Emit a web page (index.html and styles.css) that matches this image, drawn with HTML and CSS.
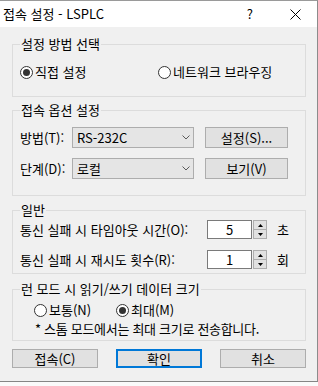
FILE: index.html
```html
<!DOCTYPE html>
<html lang="ko">
<head>
<meta charset="utf-8">
<title>접속 설정 - LSPLC</title>
<link rel="stylesheet" href="styles.css">
</head>
<body>
<div class="window">
  <div class="titlebar">
    <span class="title">접속 설정 - LSPLC</span>
    <span class="help">?</span>
    <span class="close"><svg width="11" height="11" viewBox="0 0 11 11"><path d="M0.5 0.5L10.5 10.5M10.5 0.5L0.5 10.5" stroke="#000" stroke-width="1" fill="none"/></svg></span>
  </div>
  <div class="content">
    <fieldset class="group g1">
      <legend>설정 방법 선택</legend>
      <div class="radios method">
        <span class="radio checked"><span class="circle"></span>직접 설정</span>
        <span class="radio"><span class="circle"></span>네트워크 브라우징</span>
      </div>
    </fieldset>

    <fieldset class="group g2">
      <legend>접속 옵션 설정</legend>
      <div class="opt-row">
        <span class="lbl">방법(T):</span>
        <span class="combo"><span class="combo-text">RS-232C</span><svg class="chev" width="8" height="5" viewBox="0 0 8 5"><path d="M0.5 0.5L4 4L7.5 0.5" stroke="#5a5a5a" fill="none" stroke-width="1"/></svg></span>
        <span class="btn">설정(S)...</span>
      </div>
      <div class="opt-row">
        <span class="lbl">단계(D):</span>
        <span class="combo"><span class="combo-text">로컬</span><svg class="chev" width="8" height="5" viewBox="0 0 8 5"><path d="M0.5 0.5L4 4L7.5 0.5" stroke="#5a5a5a" fill="none" stroke-width="1"/></svg></span>
        <span class="btn">보기(V)</span>
      </div>
    </fieldset>

    <fieldset class="group g3">
      <legend>일반</legend>
      <div class="gen-row">
        <span class="lbl">통신 실패 시 타임아웃 시간(O):</span>
        <span class="spin">
          <span class="field">5</span>
          <span class="updown">
            <span class="ud up"><svg width="5" height="3" viewBox="0 0 5 3"><path d="M2.5 0L5 3H0Z" fill="#000"/></svg></span>
            <span class="ud down"><svg width="5" height="3" viewBox="0 0 5 3"><path d="M0 0H5L2.5 3Z" fill="#000"/></svg></span>
          </span>
        </span>
        <span class="unit">초</span>
      </div>
      <div class="gen-row">
        <span class="lbl">통신 실패 시 재시도 횟수(R):</span>
        <span class="spin">
          <span class="field">1</span>
          <span class="updown">
            <span class="ud up"><svg width="5" height="3" viewBox="0 0 5 3"><path d="M2.5 0L5 3H0Z" fill="#000"/></svg></span>
            <span class="ud down"><svg width="5" height="3" viewBox="0 0 5 3"><path d="M0 0H5L2.5 3Z" fill="#000"/></svg></span>
          </span>
        </span>
        <span class="unit">회</span>
      </div>
    </fieldset>

    <fieldset class="group g4">
      <legend>런 모드 시 읽기/쓰기 데이터 크기</legend>
      <div class="radios size">
        <span class="radio"><span class="circle"></span>보통(N)</span>
        <span class="radio checked"><span class="circle"></span>최대(M)</span>
      </div>
      <div class="note">* 스톰 모드에서는 최대 크기로 전송합니다.</div>
    </fieldset>

    <div class="buttons">
      <span class="btn big">접속(C)</span>
      <span class="btn big focused">확인</span>
      <span class="btn big">취소</span>
    </div>
  </div>
</div>
</body>
</html>
```

FILE: styles.css
```css
* {
  box-sizing: border-box;
}

html, body {
  margin: 0;
  padding: 0;
}

body {
  width: 318px;
  height: 386px;
  overflow: hidden;
  background: #fafafa;
  font-family: "Noto Sans CJK KR", "Malgun Gothic", sans-serif;
  font-size: 13px;
  line-height: 16px;
  color: #000;
  white-space: nowrap;
}

.window {
  width: 318px;
  height: 382px;
  display: flex;
  flex-direction: column;
  background: #f0f0f0;
  border-top: 1px solid #9a9a9a;
  border-right: 1px solid #8c8c8c;
  border-bottom: 1px solid #858585;
}

.titlebar {
  flex: none;
  height: 26px;
  display: flex;
  align-items: center;
  padding-left: 3px;
  background: #fff;
}

.title {
  flex: 1;
}

.help {
  margin-right: 37px;
}

.close {
  display: flex;
  margin-right: 16px;
}

.content {
  flex: 1;
  padding: 9px 11px 0 12px;
}

.group {
  width: 294px;
  min-width: 0;
  margin: 0;
  padding: 0 7px;
  border: 1px solid #dcdcdc;
}

.group legend {
  margin: 0;
  padding: 0 1px;
  line-height: 16px;
}

.g1 {
  padding-top: 12px;
  padding-bottom: 16px;
}

.g2 {
  margin-top: 5px;
  padding-top: 9px;
  padding-bottom: 16px;
}

.g3 {
  margin-top: 6px;
  padding-top: 2px;
  padding-bottom: 4px;
}

.g4 {
  margin-top: 7px;
  padding-top: 5px;
  padding-bottom: 3px;
}

.radios {
  display: flex;
  height: 16px;
}

.radios.method .radio:first-child {
  width: 138px;
}

.radios.size {
  padding-left: 14px;
}

.radios.size .radio:first-child {
  width: 82px;
}

.radio {
  display: flex;
  align-items: center;
}

.circle {
  position: relative;
  width: 13px;
  height: 13px;
  margin-right: 2px;
  border: 1px solid #333;
  border-radius: 50%;
  background: #fff;
}

.radio.checked .circle::after {
  content: "";
  position: absolute;
  left: 2px;
  top: 2px;
  width: 7px;
  height: 7px;
  border-radius: 50%;
  background: #333;
}

.opt-row {
  display: flex;
  align-items: center;
  height: 21px;
}

.opt-row + .opt-row {
  margin-top: 10px;
}

.opt-row .lbl {
  width: 52px;
}

.combo {
  width: 122px;
  height: 21px;
  display: flex;
  align-items: center;
  padding: 0 3px 0 4px;
  background: #e5e5e5;
  border: 1px solid #adadad;
}

.combo-text {
  flex: 1;
}

.chev {
  display: block;
}

.btn {
  display: flex;
  align-items: center;
  justify-content: center;
  background: #e1e1e1;
  border: 1px solid #adadad;
}

.opt-row .btn {
  width: 83px;
  height: 21px;
  margin-left: 11px;
}

.gen-row {
  display: flex;
  align-items: center;
  height: 19px;
}

.gen-row + .gen-row {
  margin-top: 11px;
}

.gen-row .lbl {
  width: 187px;
}

.spin {
  display: flex;
  width: 60px;
  height: 19px;
}

.field {
  width: 46px;
  height: 19px;
  display: flex;
  align-items: center;
  justify-content: center;
  background: #fff;
  border: 1px solid #7a7a7a;
}

.updown {
  width: 14px;
  height: 19px;
  margin-left: 1px;
  display: flex;
  flex-direction: column;
  border: 1px solid #adadad;
  background: #e1e1e1;
}

.ud {
  flex: 1;
  display: flex;
  align-items: center;
  justify-content: center;
}

.ud svg {
  display: block;
}

.ud.up {
  border-bottom: 1px solid #adadad;
}

.unit {
  margin-left: 10px;
}

.note {
  margin-top: 3px;
  padding-left: 15px;
  height: 16px;
  letter-spacing: -0.3px;
}

.buttons {
  display: flex;
  justify-content: space-between;
  width: 294px;
  margin-top: 8px;
}

.btn.big {
  width: 86px;
  height: 19px;
}

.btn.focused {
  border: 2px solid #0078d7;
}
```
